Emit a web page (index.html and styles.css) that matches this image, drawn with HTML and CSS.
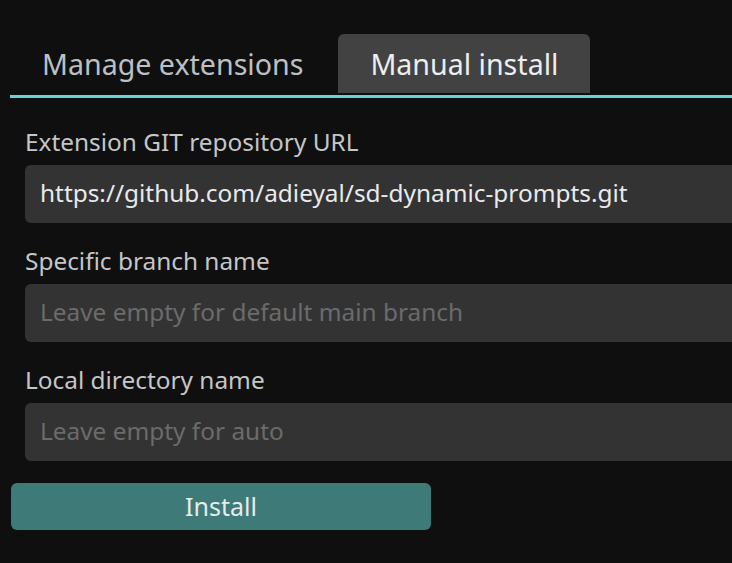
FILE: index.html
```html
<!DOCTYPE html>
<html lang="en">
<head>
<meta charset="utf-8">
<title>Manual install</title>
<link rel="stylesheet" href="styles.css">
</head>
<body>
<div class="page">
  <div class="tabs">
    <button class="tab">Manage extensions</button>
    <button class="tab tab-active">Manual install</button>
  </div>
  <div class="panel">
    <label class="field">
      <span class="field-label">Extension GIT repository URL</span>
      <input class="field-input" type="text" value="https://github.com/adieyal/sd-dynamic-prompts.git">
    </label>
    <label class="field">
      <span class="field-label">Specific branch name</span>
      <input class="field-input" type="text" placeholder="Leave empty for default main branch">
    </label>
    <label class="field">
      <span class="field-label">Local directory name</span>
      <input class="field-input" type="text" placeholder="Leave empty for auto">
    </label>
    <button class="install">Install</button>
  </div>
</div>
</body>
</html>
```
FILE: styles.css
```css
html, body {
  margin: 0;
  padding: 0;
  background: #0f0f0f;
}
.page {
  width: 722px;
  height: 529px;
  overflow: hidden;
  padding: 34px 0 0 10px;
  font-family: "Noto Sans", "Open Sans", sans-serif;
}
.tabs {
  display: flex;
  gap: 3px;
  padding-bottom: 2px;
  border-bottom: 3px solid #6ad2d4;
}
.tab {
  font-family: inherit;
  font-size: 28.6px;
  line-height: 59px;
  height: 59px;
  padding: 0 32px;
  margin: 0;
  border: none;
  background: transparent;
  color: #bcc0c4;
  border-radius: 6px 6px 0 0;
}
.tab-active {
  background: #424242;
  color: #eceef0;
}
.panel {
  display: flex;
  flex-direction: column;
  padding: 28px 0 0 15px;
  width: 760px;
}
.field {
  display: flex;
  flex-direction: column;
  gap: 7px;
  margin-bottom: 22px;
}
.field-label {
  font-size: 24.4px;
  line-height: 32px;
  color: #c4c6c8;
}
.field-input {
  font-family: inherit;
  font-size: 24.4px;
  height: 58px;
  box-sizing: border-box;
  border: none;
  border-radius: 6px;
  background: #333333;
  color: #e8eaec;
  padding: 0 15px 3px;
  outline: none;
}
.field-input::placeholder {
  color: #6b6b6b;
}
.install {
  align-self: flex-start;
  margin-left: -14px;
  width: 420px;
  height: 47px;
  border: none;
  border-radius: 6px;
  background: #3e7a78;
  color: #e6ecec;
  font-family: inherit;
  font-size: 25px;
  padding: 0 0 2px;
}
```
